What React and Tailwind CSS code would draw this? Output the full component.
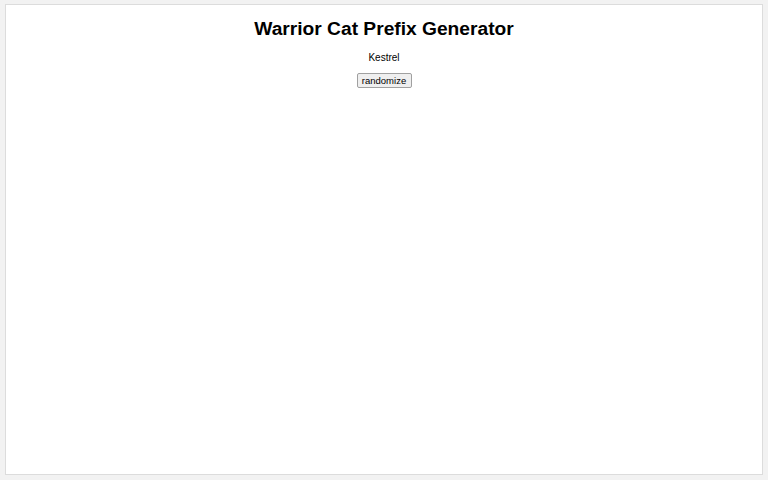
import { useState } from "react";

const prefixes = ["Kestrel", "Bramble", "Fire", "Sand", "Dust", "Leaf", "Storm", "Ash", "Thistle", "Hollow"];

export default function App() {
  const [prefix, setPrefix] = useState("Kestrel");

  const randomize = () => {
    setPrefix(prefixes[Math.floor(Math.random() * prefixes.length)]);
  };

  return (
    <div className="h-[480px] w-[768px] bg-[#f2f2f2] p-[4px_5px_5px_5px] font-['Liberation_Sans',Arial,sans-serif]">
      <div className="flex h-full flex-col items-center border border-[#dcdcdc] bg-white">
        <h1 className="mt-[13px] text-[19.2px] font-bold leading-[22px] text-black">
          Warrior Cat Prefix Generator
        </h1>
        <p className="mt-[12px] text-[10px] leading-[12px] text-black">{prefix}</p>
        <button
          onClick={randomize}
          className="mt-[9px] h-[15px] w-[55px] rounded-[2px] border border-[#a0a0a0] bg-[#efefef] text-[9.5px] leading-[12px] text-black"
        >
          randomize
        </button>
      </div>
    </div>
  );
}
